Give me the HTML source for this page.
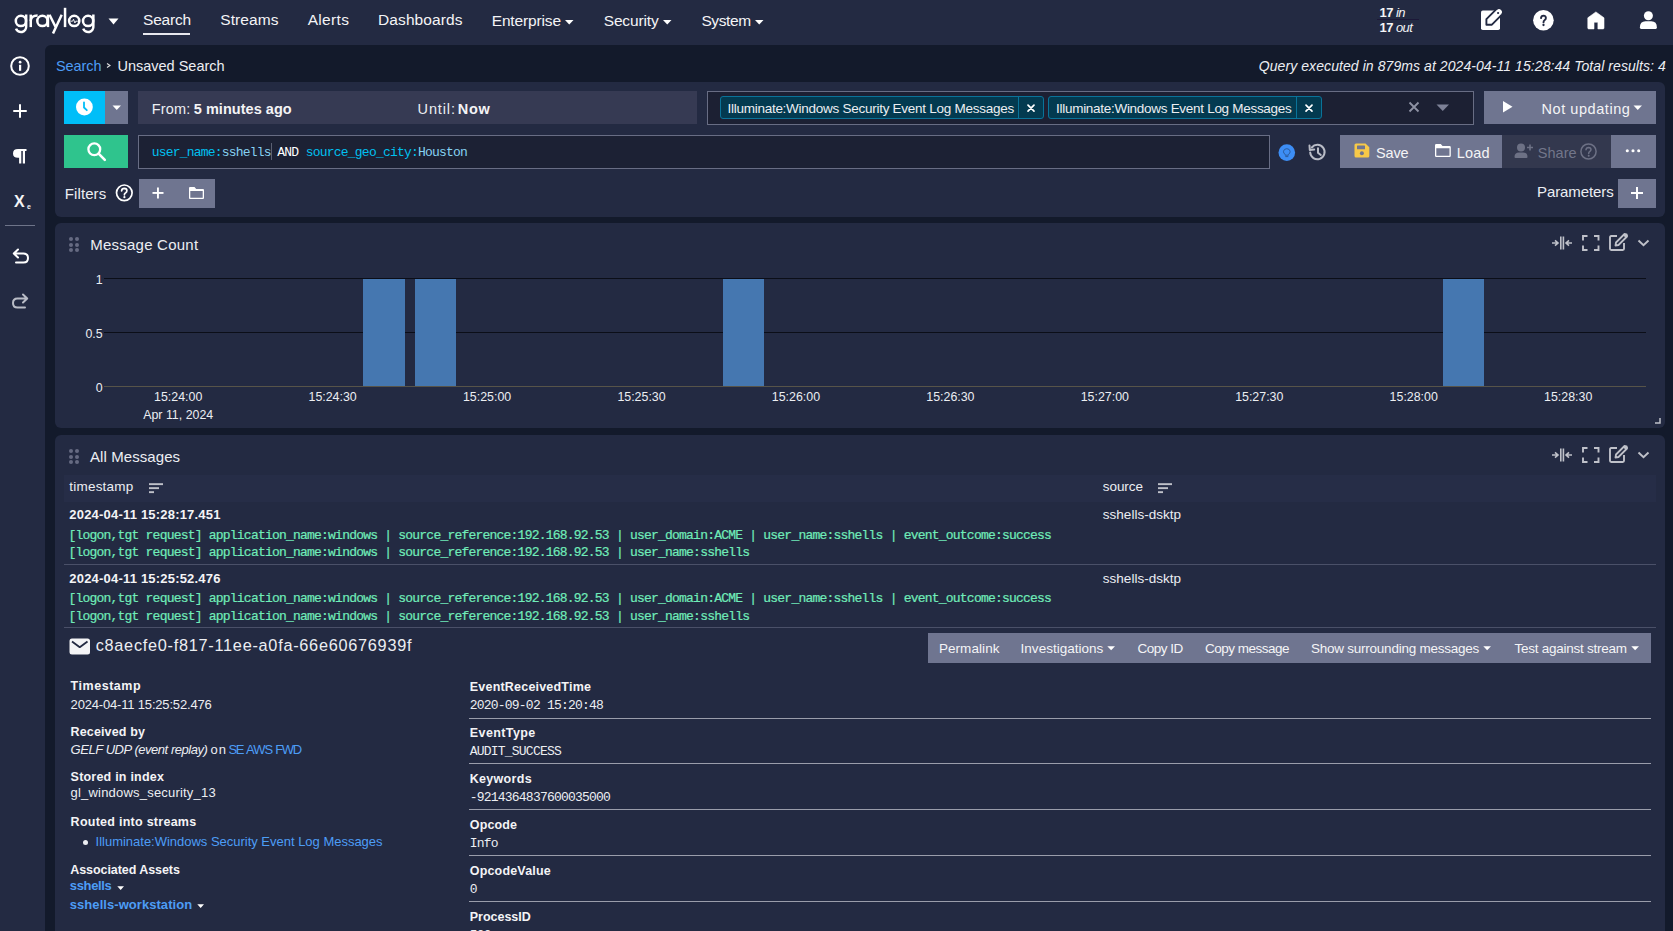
<!DOCTYPE html><html><head><meta charset="utf-8"><style>
html,body{margin:0;padding:0;}body{width:1673px;height:931px;overflow:hidden;position:relative;background:#232a42;font-family:"Liberation Sans",sans-serif;}
.t{position:absolute;white-space:nowrap;}
</style></head><body>
<div style="position:absolute;left:45px;top:45px;width:1628px;height:886px;background:#131a2b;border-top-left-radius:6px;"></div>
<svg style="position:absolute;left:8px;top:4px;" width="100" height="34" viewBox="0 0 100 34"><g stroke="#fff" stroke-width="2.5" fill="none" stroke-linecap="butt"><circle cx="12.9" cy="16.9" r="5.1"/><path d="M18.15 10.6 V22.2 A5.25 5.25 0 0 1 8 24.6"/><path d="M22.75 10.6 V23.1"/><path d="M22.75 17 Q22.9 11.6 29.6 11.6"/><circle cx="34.4" cy="16.9" r="5.1"/><path d="M39.95 10.6 V23.1"/><path d="M41.5 10.7 L47.6 23 M53.7 10.7 L45 29.6"/><path d="M57.05 3.8 V23.1"/><circle cx="66.2" cy="16.9" r="5.1"/><circle cx="80.1" cy="16.9" r="5.1"/><path d="M85.35 10.6 V22.2 A5.25 5.25 0 0 1 75.2 24.6"/></g><path d="M62.6 17.2 L64.6 17.2 L65.5 15.2 L66.9 19 L67.8 17.2 L69.8 17.2" stroke="#fff" stroke-width="0.9" fill="none"/></svg>
<svg style="position:absolute;left:108px;top:18px;" width="11" height="7" viewBox="0 0 11 7"><path d="M0.5 0.5 L10.5 0.5 L5.5 6.5 Z" fill="#fff"/></svg>
<div style="position:absolute;left:143px;top:33px;width:47px;height:1.5px;background:#e8e8ee;"></div>
<svg style="position:absolute;left:565.2px;top:19.5px;" width="9" height="5" viewBox="0 0 9 5"><path d="M0 0 L8.5 0 L4.25 4.5 Z" fill="#fff"/></svg>
<svg style="position:absolute;left:662.9px;top:19.5px;" width="9" height="5" viewBox="0 0 9 5"><path d="M0 0 L8.5 0 L4.25 4.5 Z" fill="#fff"/></svg>
<svg style="position:absolute;left:755.2px;top:19.5px;" width="9" height="5" viewBox="0 0 9 5"><path d="M0 0 L8.5 0 L4.25 4.5 Z" fill="#fff"/></svg>
<div style="position:absolute;left:1377px;top:19px;width:42px;height:1px;background:#1c1838;"></div>
<svg style="position:absolute;left:1475px;top:5px;" width="30" height="30" viewBox="0 0 30 30"><rect x="6" y="5.6" width="19" height="19.4" rx="1.8" fill="#fff"/><path d="M11.4 14.2 L21.4 4.2 A3.9 3.9 0 0 1 26.9 9.7 L16.9 19.7 L11.4 19.7 Z" fill="#fff" stroke="#232a42" stroke-width="1.9" stroke-linejoin="round"/><circle cx="23.1" cy="8" r="1.1" fill="#232a42"/></svg>
<svg style="position:absolute;left:1533px;top:10px;" width="22" height="22" viewBox="0 0 22 22"><circle cx="10.4" cy="10.3" r="10.3" fill="#fff"/><path d="M8 8.1 Q8.2 5.6 10.5 5.6 Q12.9 5.7 12.9 7.9 Q12.9 9.3 11.5 10.2 Q10.5 10.9 10.5 12.4" stroke="#232a42" stroke-width="1.9" fill="none" stroke-linecap="round"/><circle cx="10.5" cy="15" r="1.15" fill="#232a42"/></svg>
<svg style="position:absolute;left:1586px;top:11px;" width="20" height="19" viewBox="0 0 20 19"><path d="M1.8 6.8 L9.9 0.9 L18 6.8 L18 17 Q18 17.9 17.1 17.9 L11.9 17.9 L11.9 11.2 L8 11.2 L8 17.9 L2.7 17.9 Q1.8 17.9 1.8 17 Z" fill="#fff" stroke="#fff" stroke-width="0.6" stroke-linejoin="round"/></svg>
<svg style="position:absolute;left:1639px;top:11px;" width="20" height="19" viewBox="0 0 20 19"><circle cx="9.4" cy="4.8" r="4.5" fill="#fff"/><path d="M0.9 16.6 Q0.9 10.2 6.5 10.2 L12.3 10.2 Q17.9 10.2 17.9 16.6 Q17.9 17.9 16.7 17.9 L2.1 17.9 Q0.9 17.9 0.9 16.6 Z" fill="#fff"/></svg>
<svg style="position:absolute;left:10px;top:56px;" width="21" height="21" viewBox="0 0 21 21"><circle cx="10" cy="10" r="8.8" stroke="#fff" stroke-width="2" fill="none"/><rect x="9" y="8.8" width="2.2" height="6" fill="#fff"/><circle cx="10.1" cy="6.2" r="1.35" fill="#fff"/></svg>
<svg style="position:absolute;left:12px;top:103px;" width="16" height="16" viewBox="0 0 16 16"><rect x="7" y="1" width="2" height="14" fill="#fff" rx="1"/><rect x="1" y="7" width="14" height="2" fill="#fff" rx="1"/></svg>
<svg style="position:absolute;left:12px;top:148px;" width="15" height="16" viewBox="0 0 15 16"><path d="M6 1 L14.5 1 L14.5 3 L13 3 L13 15.5 L10.8 15.5 L10.8 3 L9.3 3 L9.3 15.5 L7.1 15.5 L7.1 9.8 L6 9.8 Q1 9.8 1 5.4 Q1 1 6 1 Z" fill="#fff"/></svg>
<div style="position:absolute;left:5px;top:225px;width:30px;height:1px;background:#6e7489;"></div>
<svg style="position:absolute;left:12px;top:248px;" width="18" height="17" viewBox="0 0 18 17"><path d="M6 1.5 L1.8 5.5 L6 9.5 M2.2 5.5 L11.5 5.5 Q16 5.5 16 10 Q16 14.5 11.5 14.5 L4 14.5" stroke="#fff" stroke-width="2" fill="none" stroke-linecap="round" stroke-linejoin="round"/></svg>
<svg style="position:absolute;left:11px;top:293px;" width="18" height="17" viewBox="0 0 18 17"><path d="M12 1.5 L16.2 5.5 L12 9.5 M15.8 5.5 L6.5 5.5 Q2 5.5 2 10 Q2 14.5 6.5 14.5 L14 14.5" stroke="#b9bcc6" stroke-width="2" fill="none" stroke-linecap="round" stroke-linejoin="round"/></svg>
<svg style="position:absolute;left:106px;top:62.5px;" width="5" height="5" viewBox="0 0 5 5"><path d="M1 0.5 L4 2.5 L1 4.5" stroke="#ddd" stroke-width="1.2" fill="none"/></svg>
<div style="position:absolute;left:55px;top:82px;width:1610px;height:135px;background:#232a42;border-radius:6px;"></div>
<div style="position:absolute;left:64px;top:91px;width:41px;height:33px;background:#00bef8;"></div>
<svg style="position:absolute;left:75px;top:98px;" width="19" height="19" viewBox="0 0 19 19"><circle cx="9.4" cy="9" r="8.4" fill="#fff"/><path d="M9 4.3 L9 9.5 L11.8 12.2" stroke="#00bef8" stroke-width="1.8" fill="none" stroke-linecap="round"/></svg>
<div style="position:absolute;left:105px;top:91px;width:23px;height:33px;background:#6f7590;"></div>
<svg style="position:absolute;left:112px;top:105px;" width="10" height="6" viewBox="0 0 10 6"><path d="M0.5 0.5 L9 0.5 L4.75 5 Z" fill="#fff"/></svg>
<div style="position:absolute;left:138px;top:91px;width:559px;height:33px;background:#363a53;"></div>
<div style="position:absolute;left:707px;top:91px;width:767px;height:34px;background:#1c2033;box-sizing:border-box;border:1px solid #686d84;"></div>
<div style="position:absolute;left:720px;top:96px;width:324px;height:23px;background:#033a50;box-sizing:border-box;border:1px solid #0a7399;border-radius:3px;"></div>
<div style="position:absolute;left:1018px;top:96px;width:1px;height:23px;background:#0a7399;"></div>
<svg style="position:absolute;left:1026px;top:103px;" width="10" height="10" viewBox="0 0 10 10"><path d="M2 2.2 L8 8.2 M8 2.2 L2 8.2" stroke="#fff" stroke-width="1.7" stroke-linecap="round"/></svg>
<div style="position:absolute;left:1048px;top:96px;width:274px;height:23px;background:#033a50;box-sizing:border-box;border:1px solid #0a7399;border-radius:3px;"></div>
<div style="position:absolute;left:1296px;top:96px;width:1px;height:23px;background:#0a7399;"></div>
<svg style="position:absolute;left:1304px;top:103px;" width="10" height="10" viewBox="0 0 10 10"><path d="M2 2.2 L8 8.2 M8 2.2 L2 8.2" stroke="#fff" stroke-width="1.7" stroke-linecap="round"/></svg>
<svg style="position:absolute;left:1408px;top:101px;" width="12" height="12" viewBox="0 0 12 12"><path d="M1.5 1.5 L10.5 10.5 M10.5 1.5 L1.5 10.5" stroke="#8e92a4" stroke-width="1.8"/></svg>
<svg style="position:absolute;left:1436px;top:104px;" width="14" height="8" viewBox="0 0 14 8"><path d="M0.5 0.5 L13 0.5 L6.75 7 Z" fill="#7d8197"/></svg>
<div style="position:absolute;left:1484px;top:91px;width:172px;height:33px;background:#6f7590;"></div>
<svg style="position:absolute;left:1502px;top:100px;" width="11" height="14" viewBox="0 0 11 14"><path d="M1 1 L10.5 6.8 L1 12.6 Z" fill="#fff"/></svg>
<svg style="position:absolute;left:1633px;top:105px;" width="10" height="6" viewBox="0 0 10 6"><path d="M0.5 0.5 L9 0.5 L4.75 5 Z" fill="#fff"/></svg>
<div style="position:absolute;left:64px;top:135px;width:64px;height:33px;background:#2fc48d;"></div>
<svg style="position:absolute;left:86px;top:141px;" width="21" height="21" viewBox="0 0 21 21"><circle cx="8.3" cy="8.3" r="5.9" stroke="#fff" stroke-width="2.3" fill="none"/><path d="M12.6 12.6 L18.8 18.8" stroke="#fff" stroke-width="2.6" stroke-linecap="round"/></svg>
<div style="position:absolute;left:138px;top:135px;width:1132px;height:34px;background:#1c2134;box-sizing:border-box;border:1px solid #686d84;"></div>
<div style="position:absolute;left:270.5px;top:143px;width:1.3px;height:17px;background:#5b6072;"></div>
<svg style="position:absolute;left:1278px;top:144px;" width="18" height="18" viewBox="0 0 18 18"><circle cx="8.8" cy="8.6" r="8.3" fill="#3d8ef5"/><path d="M7 10.3 Q5.3 9.2 5.5 7.2 Q5.9 4.8 8.8 4.7 Q11.7 4.8 12.1 7.2 Q12.3 9.2 10.6 10.3 L10.5 11.2 L7.1 11.2 Z" stroke="#2c5c9e" stroke-width="1" fill="none"/><path d="M7.3 12.6 L10.3 12.6" stroke="#2c5c9e" stroke-width="1"/></svg>
<svg style="position:absolute;left:1308px;top:143px;" width="20" height="19" viewBox="0 0 20 19"><path d="M3.8 4.5 A7.2 7.2 0 1 1 2.2 9.5" stroke="#b9bcc6" stroke-width="2" fill="none" stroke-linecap="round"/><path d="M1.5 2.5 L1.8 7 L6.2 6.6" stroke="#b9bcc6" stroke-width="2" fill="none" stroke-linecap="round" stroke-linejoin="round"/><path d="M10 5.2 L10 9.8 L12.8 12" stroke="#b9bcc6" stroke-width="2" fill="none" stroke-linecap="round"/></svg>
<div style="position:absolute;left:1340px;top:135px;width:162px;height:33px;background:#6f7590;"></div>
<svg style="position:absolute;left:1354px;top:143px;" width="16" height="15" viewBox="0 0 16 15"><path d="M0.5 2 Q0.5 0.5 2 0.5 L11.5 0.5 L15.3 4.3 L15.3 13 Q15.3 14.5 13.8 14.5 L2 14.5 Q0.5 14.5 0.5 13 Z" fill="#f7c948"/><rect x="3" y="2.5" width="8" height="3.8" fill="#6f7590" rx="0.5"/><circle cx="7.9" cy="10.2" r="2" fill="#6f7590"/></svg>
<svg style="position:absolute;left:1434px;top:143px;" width="18" height="15" viewBox="0 0 18 15"><path d="M1 2.2 Q1 1 2.2 1 L6.8 1 L8.5 3 L15.6 3 Q16.8 3 16.8 4.2 L16.8 12.8 Q16.8 14 15.6 14 L2.2 14 Q1 14 1 12.8 Z M2.3 5.2 L2.3 12.7 L15.5 12.7 L15.5 5.2 Z" fill="#fff" fill-rule="evenodd"/></svg>
<div style="position:absolute;left:1502px;top:135px;width:109px;height:33px;background:#33384e;"></div>
<svg style="position:absolute;left:1514px;top:143px;" width="20" height="16" viewBox="0 0 20 16"><circle cx="7" cy="4.6" r="4" fill="#6d7185"/><path d="M0.5 14 Q0.5 9.5 5 9.5 L9 9.5 Q13.5 9.5 13.5 14 Q13.5 15 12.5 15 L1.5 15 Q0.5 15 0.5 14 Z" fill="#6d7185"/><path d="M16 1.5 L16 7.5 M13 4.5 L19 4.5" stroke="#6d7185" stroke-width="1.6"/></svg>
<svg style="position:absolute;left:1580px;top:143px;" width="18" height="18" viewBox="0 0 18 18"><circle cx="8.5" cy="8.5" r="7.6" stroke="#6d7185" stroke-width="1.5" fill="none"/><path d="M6 6.8 Q6.2 4.4 8.6 4.4 Q11 4.5 11 6.6 Q11 7.9 9.6 8.7 Q8.7 9.2 8.7 10.4" stroke="#6d7185" stroke-width="1.5" fill="none" stroke-linecap="round"/><circle cx="8.7" cy="12.7" r="1" fill="#6d7185"/></svg>
<div style="position:absolute;left:1611px;top:135px;width:45px;height:33px;background:#6f7590;"></div>
<svg style="position:absolute;left:1622px;top:146px;" width="22" height="10" viewBox="0 0 22 10"><circle cx="5.3" cy="4.8" r="1.55" fill="#fff"/><circle cx="11" cy="4.8" r="1.55" fill="#fff"/><circle cx="16.7" cy="4.8" r="1.55" fill="#fff"/></svg>
<svg style="position:absolute;left:115px;top:184px;" width="19" height="19" viewBox="0 0 19 19"><circle cx="9.3" cy="8.8" r="7.8" stroke="#fff" stroke-width="1.7" fill="none"/><path d="M6.6 6.9 Q6.8 4.4 9.3 4.4 Q11.9 4.5 11.9 6.7 Q11.9 8.1 10.4 8.9 Q9.4 9.4 9.4 10.8" stroke="#fff" stroke-width="1.7" fill="none" stroke-linecap="round"/><circle cx="9.4" cy="13.2" r="1.1" fill="#fff"/></svg>
<div style="position:absolute;left:139px;top:179px;width:76px;height:29px;background:#6f7590;"></div>
<svg style="position:absolute;left:152px;top:187px;" width="12" height="12" viewBox="0 0 12 12"><rect x="5" y="0.5" width="1.9" height="11" fill="#fff"/><rect x="0.5" y="5" width="11" height="1.9" fill="#fff"/></svg>
<svg style="position:absolute;left:188px;top:186px;" width="17" height="14" viewBox="0 0 17 14"><path d="M1 2 Q1 1 2 1 L6.5 1 L8.2 3 L15 3 Q16 3 16 4 L16 12 Q16 13 15 13 L2 13 Q1 13 1 12 Z M2.3 5 L2.3 11.7 L14.7 11.7 L14.7 5 Z" fill="#fff" fill-rule="evenodd"/></svg>
<div style="position:absolute;left:1618px;top:179px;width:38px;height:29px;background:#6f7590;"></div>
<svg style="position:absolute;left:1630px;top:186px;" width="14" height="14" viewBox="0 0 14 14"><rect x="6" y="1" width="2" height="12" fill="#fff"/><rect x="1" y="6" width="12" height="2" fill="#fff"/></svg>
<div style="position:absolute;left:55px;top:223px;width:1610px;height:205px;background:#232a42;border-radius:6px;"></div>
<div style="position:absolute;left:68.6px;top:237.3px;width:4px;height:4px;background:#666b82;border-radius:50%;"></div>
<div style="position:absolute;left:74.8px;top:237.3px;width:4px;height:4px;background:#666b82;border-radius:50%;"></div>
<div style="position:absolute;left:68.6px;top:242.8px;width:4px;height:4px;background:#666b82;border-radius:50%;"></div>
<div style="position:absolute;left:74.8px;top:242.8px;width:4px;height:4px;background:#666b82;border-radius:50%;"></div>
<div style="position:absolute;left:68.6px;top:248.3px;width:4px;height:4px;background:#666b82;border-radius:50%;"></div>
<div style="position:absolute;left:74.8px;top:248.3px;width:4px;height:4px;background:#666b82;border-radius:50%;"></div>
<svg style="position:absolute;left:1551px;top:236px;" width="22" height="14" viewBox="0 0 22 14"><rect x="9" y="0.5" width="1.6" height="13" fill="#bfc1c9"/><rect x="11.6" y="0.5" width="1.6" height="13" fill="#bfc1c9"/><path d="M1 7 L6.5 7 M4 4.3 L7 7 L4 9.7" stroke="#bfc1c9" stroke-width="1.6" fill="none"/><path d="M21 7 L15.5 7 M18 4.3 L15 7 L18 9.7" stroke="#bfc1c9" stroke-width="1.6" fill="none"/></svg>
<svg style="position:absolute;left:1581.5px;top:235px;" width="18" height="16" viewBox="0 0 18 16"><path d="M1 5.5 L1 1 L5.5 1 M12 1 L16.5 1 L16.5 5.5 M16.5 10.5 L16.5 15 L12 15 M5.5 15 L1 15 L1 10.5" stroke="#bfc1c9" stroke-width="1.9" fill="none"/></svg>
<svg style="position:absolute;left:1609px;top:232px;" width="20" height="19" viewBox="0 0 20 19"><path d="M8 4 L2.2 4 Q1 4 1 5.2 L1 16.8 Q1 18 2.2 18 L13.8 18 Q15 18 15 16.8 L15 11" stroke="#bfc1c9" stroke-width="1.9" fill="none"/><path d="M6.5 13.5 L7 10.5 L15.5 2 L18 4.5 L9.5 13 Z" stroke="#bfc1c9" stroke-width="1.8" fill="none" stroke-linejoin="round"/><circle cx="16.8" cy="3.2" r="2" fill="#bfc1c9"/></svg>
<svg style="position:absolute;left:1637px;top:239px;" width="13" height="8" viewBox="0 0 13 8"><path d="M1.5 1.5 L6.5 6.3 L11.5 1.5" stroke="#bfc1c9" stroke-width="1.9" fill="none"/></svg>
<div style="position:absolute;left:103.5px;top:278px;width:1542.5px;height:1px;background:#0b0e18;"></div>
<div style="position:absolute;left:103.5px;top:332px;width:1542.5px;height:1px;background:#0b0e18;"></div>
<div style="position:absolute;left:103.5px;top:386px;width:1542.5px;height:1px;background:#575449;"></div>
<div style="position:absolute;left:363.3px;top:278.5px;width:41.30000000000001px;height:107.5px;background:#4577b0;"></div>
<div style="position:absolute;left:414.6px;top:278.5px;width:41.19999999999999px;height:107.5px;background:#4577b0;"></div>
<div style="position:absolute;left:723px;top:278.5px;width:41.10000000000002px;height:107.5px;background:#4577b0;"></div>
<div style="position:absolute;left:1442.8px;top:278.5px;width:41.100000000000136px;height:107.5px;background:#4577b0;"></div>
<svg style="position:absolute;left:1655px;top:418px;" width="6" height="6" viewBox="0 0 6 6"><path d="M5 0 L5 5 L0 5" stroke="#bfc1c9" stroke-width="1.5" fill="none"/></svg>
<div style="position:absolute;left:55px;top:435px;width:1610px;height:520px;background:#232a42;border-radius:6px;"></div>
<div style="position:absolute;left:68.6px;top:449.3px;width:4px;height:4px;background:#666b82;border-radius:50%;"></div>
<div style="position:absolute;left:74.8px;top:449.3px;width:4px;height:4px;background:#666b82;border-radius:50%;"></div>
<div style="position:absolute;left:68.6px;top:454.8px;width:4px;height:4px;background:#666b82;border-radius:50%;"></div>
<div style="position:absolute;left:74.8px;top:454.8px;width:4px;height:4px;background:#666b82;border-radius:50%;"></div>
<div style="position:absolute;left:68.6px;top:460.3px;width:4px;height:4px;background:#666b82;border-radius:50%;"></div>
<div style="position:absolute;left:74.8px;top:460.3px;width:4px;height:4px;background:#666b82;border-radius:50%;"></div>
<svg style="position:absolute;left:1551px;top:448px;" width="22" height="14" viewBox="0 0 22 14"><rect x="9" y="0.5" width="1.6" height="13" fill="#bfc1c9"/><rect x="11.6" y="0.5" width="1.6" height="13" fill="#bfc1c9"/><path d="M1 7 L6.5 7 M4 4.3 L7 7 L4 9.7" stroke="#bfc1c9" stroke-width="1.6" fill="none"/><path d="M21 7 L15.5 7 M18 4.3 L15 7 L18 9.7" stroke="#bfc1c9" stroke-width="1.6" fill="none"/></svg>
<svg style="position:absolute;left:1581.5px;top:447px;" width="18" height="16" viewBox="0 0 18 16"><path d="M1 5.5 L1 1 L5.5 1 M12 1 L16.5 1 L16.5 5.5 M16.5 10.5 L16.5 15 L12 15 M5.5 15 L1 15 L1 10.5" stroke="#bfc1c9" stroke-width="1.9" fill="none"/></svg>
<svg style="position:absolute;left:1609px;top:444px;" width="20" height="19" viewBox="0 0 20 19"><path d="M8 4 L2.2 4 Q1 4 1 5.2 L1 16.8 Q1 18 2.2 18 L13.8 18 Q15 18 15 16.8 L15 11" stroke="#bfc1c9" stroke-width="1.9" fill="none"/><path d="M6.5 13.5 L7 10.5 L15.5 2 L18 4.5 L9.5 13 Z" stroke="#bfc1c9" stroke-width="1.8" fill="none" stroke-linejoin="round"/><circle cx="16.8" cy="3.2" r="2" fill="#bfc1c9"/></svg>
<svg style="position:absolute;left:1637px;top:451px;" width="13" height="8" viewBox="0 0 13 8"><path d="M1.5 1.5 L6.5 6.3 L11.5 1.5" stroke="#bfc1c9" stroke-width="1.9" fill="none"/></svg>
<div style="position:absolute;left:64px;top:475px;width:1592px;height:27px;background:#262d47;"></div>
<svg style="position:absolute;left:149px;top:482.5px;" width="15" height="11" viewBox="0 0 15 11"><rect x="0" y="0.2" width="14" height="1.9" fill="#bfc1c9"/><rect x="0" y="4.2" width="10" height="1.9" fill="#bfc1c9"/><rect x="0" y="8.2" width="5" height="1.9" fill="#bfc1c9"/></svg>
<svg style="position:absolute;left:1158.3px;top:482.5px;" width="15" height="11" viewBox="0 0 15 11"><rect x="0" y="0.2" width="14" height="1.9" fill="#bfc1c9"/><rect x="0" y="4.2" width="10" height="1.9" fill="#bfc1c9"/><rect x="0" y="8.2" width="5" height="1.9" fill="#bfc1c9"/></svg>
<div style="position:absolute;left:64px;top:564px;width:1592px;height:1px;background:#4a5068;"></div>
<div style="position:absolute;left:64px;top:627px;width:1592px;height:1px;background:#4a5068;"></div>
<svg style="position:absolute;left:69px;top:638px;" width="22" height="17" viewBox="0 0 22 17"><rect x="0.5" y="0.5" width="20.5" height="16" rx="2.5" fill="#f4f4f6"/><path d="M3 3.5 L10.75 9.2 L18.5 3.5" stroke="#232a42" stroke-width="1.8" fill="none" stroke-linejoin="round"/></svg>
<div style="position:absolute;left:928px;top:633px;width:723px;height:29.5px;background:#6f7590;"></div>
<svg style="position:absolute;left:1107px;top:645.5px;" width="9" height="5" viewBox="0 0 9 5"><path d="M0.3 0.3 L8 0.3 L4.15 4.3 Z" fill="#fff"/></svg>
<svg style="position:absolute;left:1483.2px;top:645.5px;" width="9" height="5" viewBox="0 0 9 5"><path d="M0.3 0.3 L8 0.3 L4.15 4.3 Z" fill="#fff"/></svg>
<svg style="position:absolute;left:1630.8px;top:645.5px;" width="9" height="5" viewBox="0 0 9 5"><path d="M0.3 0.3 L8 0.3 L4.15 4.3 Z" fill="#fff"/></svg>
<div style="position:absolute;left:83.4px;top:839.6px;width:5px;height:5px;background:#eceef2;border-radius:50%;"></div>
<svg style="position:absolute;left:117px;top:886px;" width="8" height="5" viewBox="0 0 8 5"><path d="M0.3 0.3 L7 0.3 L3.65 4 Z" fill="#fff"/></svg>
<svg style="position:absolute;left:197px;top:904.3px;" width="8" height="5" viewBox="0 0 8 5"><path d="M0.3 0.3 L7 0.3 L3.65 4 Z" fill="#fff"/></svg>
<div style="position:absolute;left:469px;top:718px;width:1182px;height:1px;background:#9a9dab;"></div>
<div style="position:absolute;left:469px;top:763px;width:1182px;height:1px;background:#9a9dab;"></div>
<div style="position:absolute;left:469px;top:809px;width:1182px;height:1px;background:#9a9dab;"></div>
<div style="position:absolute;left:469px;top:855px;width:1182px;height:1px;background:#9a9dab;"></div>
<div style="position:absolute;left:469px;top:901px;width:1182px;height:1px;background:#9a9dab;"></div>
<div class="t" id="t0" style="left:143.00px;top:12.00px;font-size:15.5px;line-height:15.5px;font-family:'Liberation Sans', sans-serif;font-weight:400;font-style:normal;color:#f4f4f6;letter-spacing:-0.177px;">Search</div>
<div class="t" id="t1" style="left:220.30px;top:12.00px;font-size:15.5px;line-height:15.5px;font-family:'Liberation Sans', sans-serif;font-weight:400;font-style:normal;color:#f4f4f6;letter-spacing:0.087px;">Streams</div>
<div class="t" id="t2" style="left:307.70px;top:12.00px;font-size:15.5px;line-height:15.5px;font-family:'Liberation Sans', sans-serif;font-weight:400;font-style:normal;color:#f4f4f6;letter-spacing:0.323px;">Alerts</div>
<div class="t" id="t3" style="left:378.10px;top:12.00px;font-size:15.5px;line-height:15.5px;font-family:'Liberation Sans', sans-serif;font-weight:400;font-style:normal;color:#f4f4f6;letter-spacing:0.085px;">Dashboards</div>
<div class="t" id="t4" style="left:491.70px;top:13.00px;font-size:15.5px;line-height:15.5px;font-family:'Liberation Sans', sans-serif;font-weight:400;font-style:normal;color:#f4f4f6;letter-spacing:-0.146px;">Enterprise</div>
<div class="t" id="t5" style="left:603.70px;top:13.00px;font-size:15.5px;line-height:15.5px;font-family:'Liberation Sans', sans-serif;font-weight:400;font-style:normal;color:#f4f4f6;letter-spacing:-0.137px;">Security</div>
<div class="t" id="t6" style="left:701.40px;top:13.00px;font-size:15.5px;line-height:15.5px;font-family:'Liberation Sans', sans-serif;font-weight:400;font-style:normal;color:#f4f4f6;letter-spacing:-0.389px;">System</div>
<div class="t" id="t7" style="left:1379.60px;top:6.00px;font-size:13px;line-height:13px;font-family:'Liberation Sans', sans-serif;font-weight:400;font-style:normal;color:#f4f4f6;letter-spacing:-0.6px;"><b>17</b> <i>in</i></div>
<div class="t" id="t8" style="left:1379.60px;top:21.00px;font-size:13px;line-height:13px;font-family:'Liberation Sans', sans-serif;font-weight:400;font-style:normal;color:#f4f4f6;letter-spacing:-0.6px;"><b>17</b> <i>out</i></div>
<div class="t" id="t9" style="left:14.00px;top:194.00px;font-size:16px;line-height:16px;font-family:'Liberation Sans', sans-serif;font-weight:700;font-style:normal;color:#f4f4f6;">X</div>
<div class="t" id="t10" style="left:27.00px;top:203.00px;font-size:7px;line-height:7px;font-family:'Liberation Sans', sans-serif;font-weight:700;font-style:normal;color:#f4f4f6;">e</div>
<div class="t" id="t11" style="left:56.00px;top:59.00px;font-size:14.5px;line-height:14.5px;font-family:'Liberation Sans', sans-serif;font-weight:400;font-style:normal;color:#4d9df6;letter-spacing:-0.079px;">Search</div>
<div class="t" id="t12" style="left:117.50px;top:59.00px;font-size:14.5px;line-height:14.5px;font-family:'Liberation Sans', sans-serif;font-weight:400;font-style:normal;color:#eceef2;letter-spacing:-0.011px;">Unsaved Search</div>
<div class="t" id="t13" style="left:1258.80px;top:59.00px;font-size:14px;line-height:14px;font-family:'Liberation Sans', sans-serif;font-weight:400;font-style:italic;color:#eceef2;letter-spacing:0.075px;">Query executed in 879ms at 2024-04-11 15:28:44 Total results: 4</div>
<div class="t" id="t14" style="left:151.70px;top:102.00px;font-size:14.5px;line-height:14.5px;font-family:'Liberation Sans', sans-serif;font-weight:400;font-style:normal;color:#eceef2;letter-spacing:0.175px;">From:</div>
<div class="t" id="t15" style="left:193.80px;top:102.00px;font-size:14.5px;line-height:14.5px;font-family:'Liberation Sans', sans-serif;font-weight:700;font-style:normal;color:#f4f4f6;letter-spacing:0.030px;">5 minutes ago</div>
<div class="t" id="t16" style="left:417.60px;top:102.00px;font-size:14.5px;line-height:14.5px;font-family:'Liberation Sans', sans-serif;font-weight:400;font-style:normal;color:#eceef2;letter-spacing:0.863px;">Until:</div>
<div class="t" id="t17" style="left:457.80px;top:102.00px;font-size:14.5px;line-height:14.5px;font-family:'Liberation Sans', sans-serif;font-weight:700;font-style:normal;color:#f4f4f6;letter-spacing:0.725px;">Now</div>
<div class="t" id="t18" style="left:727.50px;top:102.00px;font-size:13.5px;line-height:13.5px;font-family:'Liberation Sans', sans-serif;font-weight:400;font-style:normal;color:#eceef2;letter-spacing:-0.266px;">Illuminate:Windows Security Event Log Messages</div>
<div class="t" id="t19" style="left:1056.10px;top:102.00px;font-size:13.5px;line-height:13.5px;font-family:'Liberation Sans', sans-serif;font-weight:400;font-style:normal;color:#eceef2;letter-spacing:-0.290px;">Illuminate:Windows Event Log Messages</div>
<div class="t" id="t20" style="left:1541.50px;top:102.00px;font-size:14.5px;line-height:14.5px;font-family:'Liberation Sans', sans-serif;font-weight:400;font-style:normal;color:#f4f4f6;letter-spacing:0.557px;">Not updating</div>
<div class="t" id="t21" style="left:151.70px;top:146.00px;font-size:13px;line-height:13px;font-family:'Liberation Mono', monospace;font-weight:400;font-style:normal;color:#00c0f0;letter-spacing:-0.792px;">user_name:<span style="color:#86d2f2">sshells</span></div>
<div class="t" id="t22" style="left:277.30px;top:146.00px;font-size:13px;line-height:13px;font-family:'Liberation Mono', monospace;font-weight:400;font-style:normal;color:#ffffff;letter-spacing:-0.792px;">AND</div>
<div class="t" id="t23" style="left:305.80px;top:146.00px;font-size:13px;line-height:13px;font-family:'Liberation Mono', monospace;font-weight:400;font-style:normal;color:#00c0f0;letter-spacing:-0.792px;">source_geo_city:<span style="color:#86d2f2">Houston</span></div>
<div class="t" id="t24" style="left:1376.00px;top:146.00px;font-size:14.5px;line-height:14.5px;font-family:'Liberation Sans', sans-serif;font-weight:400;font-style:normal;color:#f4f4f6;letter-spacing:-0.168px;">Save</div>
<div class="t" id="t25" style="left:1456.70px;top:146.00px;font-size:14.5px;line-height:14.5px;font-family:'Liberation Sans', sans-serif;font-weight:400;font-style:normal;color:#f4f4f6;letter-spacing:0.165px;">Load</div>
<div class="t" id="t26" style="left:1537.70px;top:146.00px;font-size:14.5px;line-height:14.5px;font-family:'Liberation Sans', sans-serif;font-weight:400;font-style:normal;color:#72768a;letter-spacing:0.064px;">Share</div>
<div class="t" id="t27" style="left:64.80px;top:186.00px;font-size:15px;line-height:15px;font-family:'Liberation Sans', sans-serif;font-weight:400;font-style:normal;color:#eceef2;letter-spacing:0.093px;">Filters</div>
<div class="t" id="t28" style="left:1537.00px;top:184.00px;font-size:15px;line-height:15px;font-family:'Liberation Sans', sans-serif;font-weight:400;font-style:normal;color:#eceef2;letter-spacing:-0.092px;">Parameters</div>
<div class="t" id="t29" style="left:90.20px;top:237.00px;font-size:15px;line-height:15px;font-family:'Liberation Sans', sans-serif;font-weight:400;font-style:normal;color:#eceef2;letter-spacing:0.236px;">Message Count</div>
<div class="t" id="t30" style="right:1570.40px;top:274.00px;font-size:12.4px;line-height:12.4px;font-family:'Liberation Sans', sans-serif;font-weight:400;font-style:normal;color:#eceef2;">1</div>
<div class="t" id="t31" style="right:1570.40px;top:328.00px;font-size:12.4px;line-height:12.4px;font-family:'Liberation Sans', sans-serif;font-weight:400;font-style:normal;color:#eceef2;">0.5</div>
<div class="t" id="t32" style="right:1570.40px;top:382.00px;font-size:12.4px;line-height:12.4px;font-family:'Liberation Sans', sans-serif;font-weight:400;font-style:normal;color:#eceef2;">0</div>
<div class="t" id="t33" style="left:178.20px;transform:translateX(-50%);top:391.00px;font-size:12.4px;line-height:12.4px;font-family:'Liberation Sans', sans-serif;font-weight:400;font-style:normal;color:#eceef2;">15:24:00</div>
<div class="t" id="t34" style="left:332.64px;transform:translateX(-50%);top:391.00px;font-size:12.4px;line-height:12.4px;font-family:'Liberation Sans', sans-serif;font-weight:400;font-style:normal;color:#eceef2;">15:24:30</div>
<div class="t" id="t35" style="left:487.08px;transform:translateX(-50%);top:391.00px;font-size:12.4px;line-height:12.4px;font-family:'Liberation Sans', sans-serif;font-weight:400;font-style:normal;color:#eceef2;">15:25:00</div>
<div class="t" id="t36" style="left:641.52px;transform:translateX(-50%);top:391.00px;font-size:12.4px;line-height:12.4px;font-family:'Liberation Sans', sans-serif;font-weight:400;font-style:normal;color:#eceef2;">15:25:30</div>
<div class="t" id="t37" style="left:795.96px;transform:translateX(-50%);top:391.00px;font-size:12.4px;line-height:12.4px;font-family:'Liberation Sans', sans-serif;font-weight:400;font-style:normal;color:#eceef2;">15:26:00</div>
<div class="t" id="t38" style="left:950.40px;transform:translateX(-50%);top:391.00px;font-size:12.4px;line-height:12.4px;font-family:'Liberation Sans', sans-serif;font-weight:400;font-style:normal;color:#eceef2;">15:26:30</div>
<div class="t" id="t39" style="left:1104.84px;transform:translateX(-50%);top:391.00px;font-size:12.4px;line-height:12.4px;font-family:'Liberation Sans', sans-serif;font-weight:400;font-style:normal;color:#eceef2;">15:27:00</div>
<div class="t" id="t40" style="left:1259.28px;transform:translateX(-50%);top:391.00px;font-size:12.4px;line-height:12.4px;font-family:'Liberation Sans', sans-serif;font-weight:400;font-style:normal;color:#eceef2;">15:27:30</div>
<div class="t" id="t41" style="left:1413.72px;transform:translateX(-50%);top:391.00px;font-size:12.4px;line-height:12.4px;font-family:'Liberation Sans', sans-serif;font-weight:400;font-style:normal;color:#eceef2;">15:28:00</div>
<div class="t" id="t42" style="left:1568.16px;transform:translateX(-50%);top:391.00px;font-size:12.4px;line-height:12.4px;font-family:'Liberation Sans', sans-serif;font-weight:400;font-style:normal;color:#eceef2;">15:28:30</div>
<div class="t" id="t43" style="left:178.20px;transform:translateX(-50%);top:409.00px;font-size:12.4px;line-height:12.4px;font-family:'Liberation Sans', sans-serif;font-weight:400;font-style:normal;color:#eceef2;">Apr 11, 2024</div>
<div class="t" id="t44" style="left:90.00px;top:449.00px;font-size:15px;line-height:15px;font-family:'Liberation Sans', sans-serif;font-weight:400;font-style:normal;color:#eceef2;letter-spacing:0.082px;">All Messages</div>
<div class="t" id="t45" style="left:69.30px;top:480.00px;font-size:13.5px;line-height:13.5px;font-family:'Liberation Sans', sans-serif;font-weight:400;font-style:normal;color:#eceef2;letter-spacing:0.212px;">timestamp</div>
<div class="t" id="t46" style="left:1102.80px;top:480.00px;font-size:13.5px;line-height:13.5px;font-family:'Liberation Sans', sans-serif;font-weight:400;font-style:normal;color:#eceef2;letter-spacing:-0.070px;">source</div>
<div class="t" id="t47" style="left:69.30px;top:508.00px;font-size:13px;line-height:13px;font-family:'Liberation Sans', sans-serif;font-weight:700;font-style:normal;color:#f4f4f6;letter-spacing:0.200px;">2024-04-11 15:28:17.451</div>
<div class="t" id="t48" style="left:1102.80px;top:508.00px;font-size:13.5px;line-height:13.5px;font-family:'Liberation Sans', sans-serif;font-weight:400;font-style:normal;color:#eceef2;letter-spacing:0.021px;">sshells-dsktp</div>
<div class="t" id="t49" style="left:68.40px;top:529.00px;font-size:13px;line-height:13px;font-family:'Liberation Mono', monospace;font-weight:400;font-style:normal;color:#70ecb9;letter-spacing:-0.782px;-webkit-text-stroke:0.2px #70ecb9;">[logon,tgt request] application_name:windows | source_reference:192.168.92.53 | user_domain:ACME | user_name:sshells | event_outcome:success</div>
<div class="t" id="t50" style="left:68.40px;top:546.00px;font-size:13px;line-height:13px;font-family:'Liberation Mono', monospace;font-weight:400;font-style:normal;color:#70ecb9;letter-spacing:-0.782px;-webkit-text-stroke:0.2px #70ecb9;">[logon,tgt request] application_name:windows | source_reference:192.168.92.53 | user_name:sshells</div>
<div class="t" id="t51" style="left:69.30px;top:572.00px;font-size:13px;line-height:13px;font-family:'Liberation Sans', sans-serif;font-weight:700;font-style:normal;color:#f4f4f6;letter-spacing:0.200px;">2024-04-11 15:25:52.476</div>
<div class="t" id="t52" style="left:1102.80px;top:572.00px;font-size:13.5px;line-height:13.5px;font-family:'Liberation Sans', sans-serif;font-weight:400;font-style:normal;color:#eceef2;letter-spacing:0.021px;">sshells-dsktp</div>
<div class="t" id="t53" style="left:68.40px;top:592.00px;font-size:13px;line-height:13px;font-family:'Liberation Mono', monospace;font-weight:400;font-style:normal;color:#70ecb9;letter-spacing:-0.782px;-webkit-text-stroke:0.2px #70ecb9;">[logon,tgt request] application_name:windows | source_reference:192.168.92.53 | user_domain:ACME | user_name:sshells | event_outcome:success</div>
<div class="t" id="t54" style="left:68.40px;top:610.00px;font-size:13px;line-height:13px;font-family:'Liberation Mono', monospace;font-weight:400;font-style:normal;color:#70ecb9;letter-spacing:-0.782px;-webkit-text-stroke:0.2px #70ecb9;">[logon,tgt request] application_name:windows | source_reference:192.168.92.53 | user_name:sshells</div>
<div class="t" id="t55" style="left:95.70px;top:637.00px;font-size:16.3px;line-height:16.3px;font-family:'Liberation Sans', sans-serif;font-weight:400;font-style:normal;color:#eceef2;letter-spacing:0.729px;">c8aecfe0-f817-11ee-a0fa-66e60676939f</div>
<div class="t" id="t56" style="left:938.90px;top:642.00px;font-size:13.5px;line-height:13.5px;font-family:'Liberation Sans', sans-serif;font-weight:400;font-style:normal;color:#f4f4f6;letter-spacing:0.069px;">Permalink</div>
<div class="t" id="t57" style="left:1020.60px;top:642.00px;font-size:13.5px;line-height:13.5px;font-family:'Liberation Sans', sans-serif;font-weight:400;font-style:normal;color:#f4f4f6;letter-spacing:0.009px;">Investigations</div>
<div class="t" id="t58" style="left:1137.60px;top:642.00px;font-size:13.5px;line-height:13.5px;font-family:'Liberation Sans', sans-serif;font-weight:400;font-style:normal;color:#f4f4f6;letter-spacing:-0.500px;">Copy ID</div>
<div class="t" id="t59" style="left:1205.00px;top:642.00px;font-size:13.5px;line-height:13.5px;font-family:'Liberation Sans', sans-serif;font-weight:400;font-style:normal;color:#f4f4f6;letter-spacing:-0.506px;">Copy message</div>
<div class="t" id="t60" style="left:1311.00px;top:642.00px;font-size:13.5px;line-height:13.5px;font-family:'Liberation Sans', sans-serif;font-weight:400;font-style:normal;color:#f4f4f6;letter-spacing:-0.243px;">Show surrounding messages</div>
<div class="t" id="t61" style="left:1514.40px;top:642.00px;font-size:13.5px;line-height:13.5px;font-family:'Liberation Sans', sans-serif;font-weight:400;font-style:normal;color:#f4f4f6;letter-spacing:-0.243px;">Test against stream</div>
<div class="t" id="t62" style="left:70.60px;top:680.00px;font-size:12.5px;line-height:12.5px;font-family:'Liberation Sans', sans-serif;font-weight:700;font-style:normal;color:#f4f4f6;letter-spacing:0.529px;">Timestamp</div>
<div class="t" id="t63" style="left:70.60px;top:698.00px;font-size:13px;line-height:13px;font-family:'Liberation Sans', sans-serif;font-weight:400;font-style:normal;color:#eceef2;letter-spacing:-0.178px;">2024-04-11 15:25:52.476</div>
<div class="t" id="t64" style="left:70.60px;top:726.00px;font-size:12.5px;line-height:12.5px;font-family:'Liberation Sans', sans-serif;font-weight:700;font-style:normal;color:#f4f4f6;letter-spacing:0.133px;">Received by</div>
<div class="t" id="t65" style="left:70.60px;top:743.00px;font-size:13px;line-height:13px;font-family:'Liberation Sans', sans-serif;font-weight:400;font-style:italic;color:#eceef2;letter-spacing:-0.457px;">GELF UDP (event replay)</div>
<div class="t" id="t66" style="left:210.40px;top:743.00px;font-size:13px;line-height:13px;font-family:'Liberation Sans', sans-serif;font-weight:400;font-style:normal;color:#eceef2;letter-spacing:1.171px;">on</div>
<div class="t" id="t67" style="left:228.60px;top:743.00px;font-size:13px;line-height:13px;font-family:'Liberation Sans', sans-serif;font-weight:400;font-style:normal;color:#4d9df6;letter-spacing:-1.504px;">SE</div>
<div class="t" id="t68" style="left:246.00px;top:743.00px;font-size:13px;line-height:13px;font-family:'Liberation Sans', sans-serif;font-weight:400;font-style:normal;color:#4d9df6;letter-spacing:-1.000px;">AWS</div>
<div class="t" id="t69" style="left:275.20px;top:743.00px;font-size:13px;line-height:13px;font-family:'Liberation Sans', sans-serif;font-weight:400;font-style:normal;color:#4d9df6;letter-spacing:-1.285px;">FWD</div>
<div class="t" id="t70" style="left:70.60px;top:771.00px;font-size:12.5px;line-height:12.5px;font-family:'Liberation Sans', sans-serif;font-weight:700;font-style:normal;color:#f4f4f6;letter-spacing:0.215px;">Stored in index</div>
<div class="t" id="t71" style="left:70.60px;top:786.00px;font-size:13px;line-height:13px;font-family:'Liberation Sans', sans-serif;font-weight:400;font-style:normal;color:#eceef2;letter-spacing:0.196px;">gl_windows_security_13</div>
<div class="t" id="t72" style="left:70.60px;top:816.00px;font-size:12.5px;line-height:12.5px;font-family:'Liberation Sans', sans-serif;font-weight:700;font-style:normal;color:#f4f4f6;letter-spacing:0.263px;">Routed into streams</div>
<div class="t" id="t73" style="left:95.60px;top:835.00px;font-size:13px;line-height:13px;font-family:'Liberation Sans', sans-serif;font-weight:400;font-style:normal;color:#4d9df6;letter-spacing:-0.014px;">Illuminate:Windows Security Event Log Messages</div>
<div class="t" id="t74" style="left:70.20px;top:864.00px;font-size:12.5px;line-height:12.5px;font-family:'Liberation Sans', sans-serif;font-weight:700;font-style:normal;color:#f4f4f6;letter-spacing:-0.063px;">Associated Assets</div>
<div class="t" id="t75" style="left:69.80px;top:879.00px;font-size:13px;line-height:13px;font-family:'Liberation Sans', sans-serif;font-weight:700;font-style:normal;color:#4d9df6;letter-spacing:-0.342px;">sshells</div>
<div class="t" id="t76" style="left:69.80px;top:898.00px;font-size:13px;line-height:13px;font-family:'Liberation Sans', sans-serif;font-weight:700;font-style:normal;color:#4d9df6;letter-spacing:0.054px;">sshells-workstation</div>
<div class="t" id="t77" style="left:469.80px;top:681.00px;font-size:12.5px;line-height:12.5px;font-family:'Liberation Sans', sans-serif;font-weight:700;font-style:normal;color:#f4f4f6;letter-spacing:0.201px;">EventReceivedTime</div>
<div class="t" id="t78" style="left:469.80px;top:699.00px;font-size:13px;line-height:13px;font-family:'Liberation Mono', monospace;font-weight:400;font-style:normal;color:#eceef2;letter-spacing:-0.792px;">2020-09-02 15:20:48</div>
<div class="t" id="t79" style="left:469.80px;top:727.00px;font-size:12.5px;line-height:12.5px;font-family:'Liberation Sans', sans-serif;font-weight:700;font-style:normal;color:#f4f4f6;letter-spacing:0.400px;">EventType</div>
<div class="t" id="t80" style="left:469.80px;top:745.00px;font-size:13px;line-height:13px;font-family:'Liberation Mono', monospace;font-weight:400;font-style:normal;color:#eceef2;letter-spacing:-0.792px;">AUDIT_SUCCESS</div>
<div class="t" id="t81" style="left:469.80px;top:773.00px;font-size:12.5px;line-height:12.5px;font-family:'Liberation Sans', sans-serif;font-weight:700;font-style:normal;color:#f4f4f6;letter-spacing:0.293px;">Keywords</div>
<div class="t" id="t82" style="left:469.80px;top:791.00px;font-size:13px;line-height:13px;font-family:'Liberation Mono', monospace;font-weight:400;font-style:normal;color:#eceef2;letter-spacing:-0.792px;">-9214364837600035000</div>
<div class="t" id="t83" style="left:469.80px;top:819.00px;font-size:12.5px;line-height:12.5px;font-family:'Liberation Sans', sans-serif;font-weight:700;font-style:normal;color:#f4f4f6;letter-spacing:0.131px;">Opcode</div>
<div class="t" id="t84" style="left:469.80px;top:837.00px;font-size:13px;line-height:13px;font-family:'Liberation Mono', monospace;font-weight:400;font-style:normal;color:#eceef2;letter-spacing:-0.792px;">Info</div>
<div class="t" id="t85" style="left:469.80px;top:865.00px;font-size:12.5px;line-height:12.5px;font-family:'Liberation Sans', sans-serif;font-weight:700;font-style:normal;color:#f4f4f6;letter-spacing:0.170px;">OpcodeValue</div>
<div class="t" id="t86" style="left:469.80px;top:883.00px;font-size:13px;line-height:13px;font-family:'Liberation Mono', monospace;font-weight:400;font-style:normal;color:#eceef2;letter-spacing:-0.792px;">0</div>
<div class="t" id="t87" style="left:469.80px;top:911.00px;font-size:12.5px;line-height:12.5px;font-family:'Liberation Sans', sans-serif;font-weight:700;font-style:normal;color:#f4f4f6;letter-spacing:-0.020px;">ProcessID</div>
<div class="t" id="t88" style="left:469.80px;top:929.00px;font-size:13px;line-height:13px;font-family:'Liberation Mono', monospace;font-weight:400;font-style:normal;color:#eceef2;letter-spacing:-0.792px;">500</div>
</body></html>
